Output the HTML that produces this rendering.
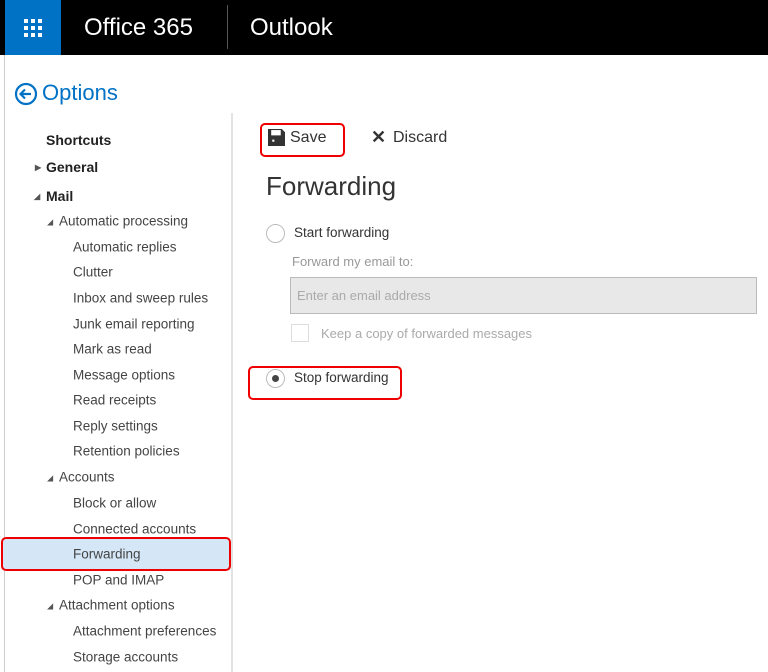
<!DOCTYPE html>
<html><head><meta charset="utf-8"><style>
*{margin:0;padding:0;box-sizing:border-box}
body{width:768px;height:672px;overflow:hidden;background:#fff;font-family:"Liberation Sans",sans-serif;position:relative;color:#333}
.a{position:absolute;white-space:nowrap}
.hdr{left:0;top:0;width:768px;height:55px;background:#000}
.waf{left:5px;top:0;width:56px;height:55px;background:#0072c6}
.m{font-size:13.5px;color:#444;transform:translateY(-50%)}
.b{font-weight:bold;color:#222;font-size:14px}
.tri{font-size:8px;color:#555;position:absolute}
.box{border:2px solid #e00;border-radius:5px}
</style></head><body>
<div class="a hdr"></div>
<div class="a waf"></div>
<svg class="a" style="left:23px;top:18px" width="20" height="20" viewBox="0 0 20 20" fill="#fff">
<rect x="1" y="1" width="4" height="4"/><rect x="8" y="1" width="4" height="4"/><rect x="15" y="1" width="4" height="4"/>
<rect x="1" y="8" width="4" height="4"/><rect x="8" y="8" width="4" height="4"/><rect x="15" y="8" width="4" height="4"/>
<rect x="1" y="15" width="4" height="4"/><rect x="8" y="15" width="4" height="4"/><rect x="15" y="15" width="4" height="4"/></svg>
<div class="a" style="left:84px;top:14px;color:#fff;font-size:24px">Office 365</div>
<div class="a" style="left:227px;top:5px;width:1px;height:44px;background:#555"></div>
<div class="a" style="left:250px;top:14px;color:#fff;font-size:24px">Outlook</div>
<div class="a" style="left:4px;top:55px;width:1px;height:617px;background:#ccc"></div>
<svg class="a" style="left:14px;top:82px" width="24" height="24" viewBox="0 0 24 24"><circle cx="12" cy="12" r="10" fill="none" stroke="#0072c6" stroke-width="2.2"/><path d="M17 12H7M11 7.5 6.5 12 11 16.5" fill="none" stroke="#0072c6" stroke-width="2.2"/></svg>
<div class="a" style="left:42px;top:80px;color:#0072c6;font-size:22px">Options</div>
<div class="a" style="left:231px;top:113px;width:2px;height:559px;background:#e3e3e3"></div>
<div class="a" style="left:2px;top:538px;width:228px;height:32px;background:#d5e7f7"></div>
<div class="a m b" style="left:46px;top:140px">Shortcuts</div>
<div class="a m b" style="left:46px;top:167px"><span class="tri" style="left:-11px;top:4px">▶</span>General</div>
<div class="a m b" style="left:46px;top:196px"><span class="tri" style="left:-12px;top:4px">◢</span>Mail</div>
<div class="a m" style="left:59px;top:221px"><span class="tri" style="left:-12px;top:4px">◢</span>Automatic processing</div>
<div class="a m" style="left:73px;top:247px">Automatic replies</div>
<div class="a m" style="left:73px;top:272px">Clutter</div>
<div class="a m" style="left:73px;top:298px">Inbox and sweep rules</div>
<div class="a m" style="left:73px;top:324px">Junk email reporting</div>
<div class="a m" style="left:73px;top:349px">Mark as read</div>
<div class="a m" style="left:73px;top:375px">Message options</div>
<div class="a m" style="left:73px;top:400px">Read receipts</div>
<div class="a m" style="left:73px;top:426px">Reply settings</div>
<div class="a m" style="left:73px;top:451px">Retention policies</div>
<div class="a m" style="left:59px;top:477px"><span class="tri" style="left:-12px;top:4px">◢</span>Accounts</div>
<div class="a m" style="left:73px;top:503px">Block or allow</div>
<div class="a m" style="left:73px;top:529px">Connected accounts</div>
<div class="a m" style="left:73px;top:554px">Forwarding</div>
<div class="a m" style="left:73px;top:580px">POP and IMAP</div>
<div class="a m" style="left:59px;top:605px"><span class="tri" style="left:-12px;top:4px">◢</span>Attachment options</div>
<div class="a m" style="left:73px;top:631px">Attachment preferences</div>
<div class="a m" style="left:73px;top:657px">Storage accounts</div>
<div class="a box" style="left:1px;top:537px;width:230px;height:34px"></div>
<svg class="a" style="left:268px;top:129px" width="17" height="17" viewBox="0 0 16 16"><path d="M0 0h13l3 3v13H0z" fill="#333"/><rect x="3" y="1" width="9" height="5" fill="#fff"/><rect x="4" y="10" width="2" height="2" fill="#fff"/></svg>
<div class="a" style="left:290px;top:129px;font-size:16px;color:#333">Save</div>
<div class="a box" style="left:260px;top:123px;width:85px;height:34px"></div>
<div class="a" style="left:371px;top:127px;font-size:18px;font-weight:bold;color:#333">✕</div>
<div class="a" style="left:393px;top:129px;font-size:16px;color:#333">Discard</div>
<div class="a" style="left:266px;top:171px;font-size:26px;color:#333">Forwarding</div>
<div class="a" style="left:266px;top:224px;width:19px;height:19px;border:1px solid #bbb;border-radius:50%"></div>
<div class="a" style="left:294px;top:225px;font-size:13.5px;color:#333">Start forwarding</div>
<div class="a" style="left:292px;top:254px;font-size:13px;color:#999">Forward my email to:</div>
<div class="a" style="left:290px;top:277px;width:467px;height:37px;background:#e8e8e8;border:1px solid #bbb"></div>
<div class="a" style="left:297px;top:288px;font-size:13px;color:#aaa">Enter an email address</div>
<div class="a" style="left:291px;top:324px;width:18px;height:18px;border:1px solid #ddd"></div>
<div class="a" style="left:321px;top:326px;font-size:13px;color:#aaa">Keep a copy of forwarded messages</div>
<div class="a" style="left:266px;top:369px;width:19px;height:19px;border:1px solid #bbb;border-radius:50%"></div>
<div class="a" style="left:272px;top:375px;width:7px;height:7px;background:#444;border-radius:50%"></div>
<div class="a" style="left:294px;top:370px;font-size:13.5px;color:#333">Stop forwarding</div>
<div class="a box" style="left:248px;top:366px;width:154px;height:34px"></div>
</body></html>
